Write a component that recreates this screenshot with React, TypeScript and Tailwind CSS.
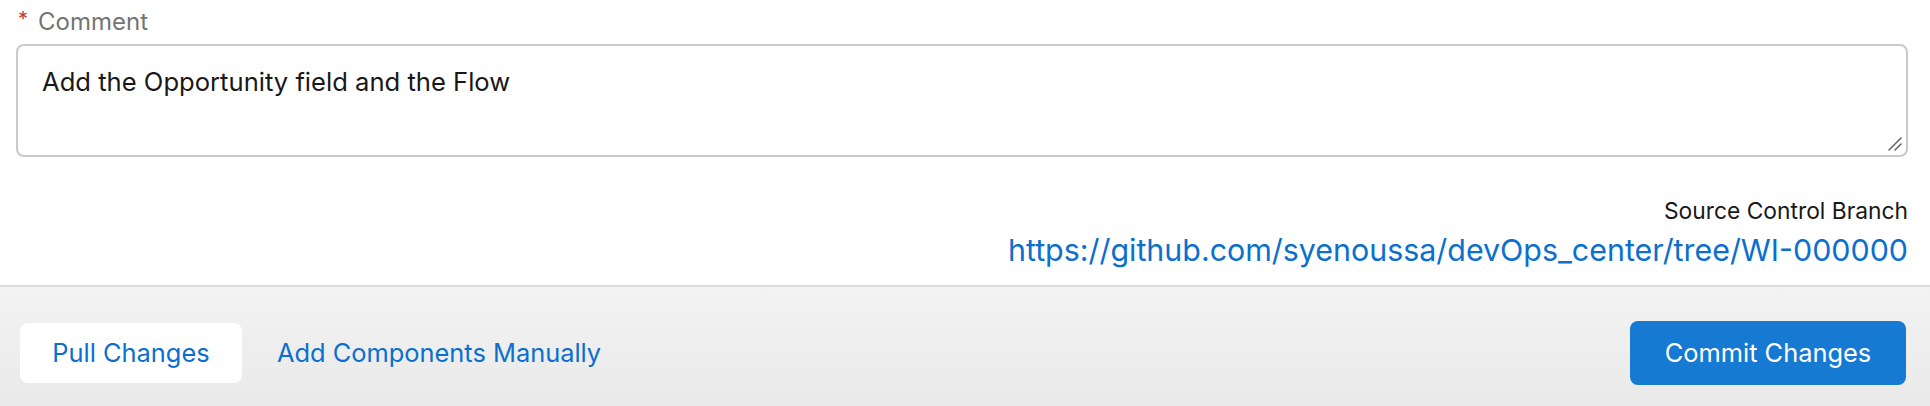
import React from 'react';

const font = { fontFamily: 'Inter, "Noto Sans", sans-serif' };

export default function App() {
  return (
    <div className="w-[1930px] h-[406px] overflow-hidden bg-white flex flex-col" style={font}>
      {/* Body */}
      <div className="pl-[16px] pr-[22px] pt-[4px] flex flex-col h-[285px] shrink-0">
        <label className="flex items-start h-[36px] leading-[36px] text-[24px] text-[#747474]">
          <span className="text-[#c23934] text-[20px] leading-[30px] ml-[2px] mr-[10px]">*</span>
          Comment
        </label>
        <div className="relative mt-[4px]">
          <textarea
            readOnly
            defaultValue="Add the Opportunity field and the Flow"
            className="block w-full h-[113px] resize-none rounded-[8px] border-2 border-[#c9c9c9] bg-white px-[24px] py-[16px] text-[25.6px] leading-[39px] text-[#181818] outline-none"
            style={font}
          />
          <svg className="absolute right-[5px] bottom-[5px]" width="16" height="16" viewBox="0 0 16 16">
            <path d="M2 14 L14 2 M8 14 L14 8" stroke="#6b6b6b" strokeWidth="1.6" strokeLinecap="round" />
          </svg>
        </div>
        <div className="mt-[36px] flex flex-col items-end">
          <span className="text-[22.8px] leading-[36px] text-[#181818]">Source Control Branch</span>
          <a href="#" className="text-[30.4px] leading-[42px] text-[#0b6fce]">
            https://github.com/syenoussa/devOps_center/tree/WI-000000
          </a>
        </div>
      </div>

      {/* Footer */}
      <div className="flex-1 border-t-2 border-[#dddbda] bg-gradient-to-b from-[#f3f3f3] to-[#e9e9e9] pl-[20px] pr-[24px] pt-[34px]">
        <div className="flex h-[64px] items-center justify-between">
          <div className="flex items-center gap-[35px]">
            <button className="h-[60px] w-[222px] rounded-[8px] bg-white text-[25.4px] text-[#0b6fce]" style={font}>
              Pull Changes
            </button>
            <button className="text-[25.4px] text-[#0b6fce]" style={font}>
              Add Components Manually
            </button>
          </div>
          <button className="h-[64px] w-[276px] rounded-[8px] bg-[#1679d2] text-[25.4px] text-white" style={font}>
            Commit Changes
          </button>
        </div>
      </div>
    </div>
  );
}
